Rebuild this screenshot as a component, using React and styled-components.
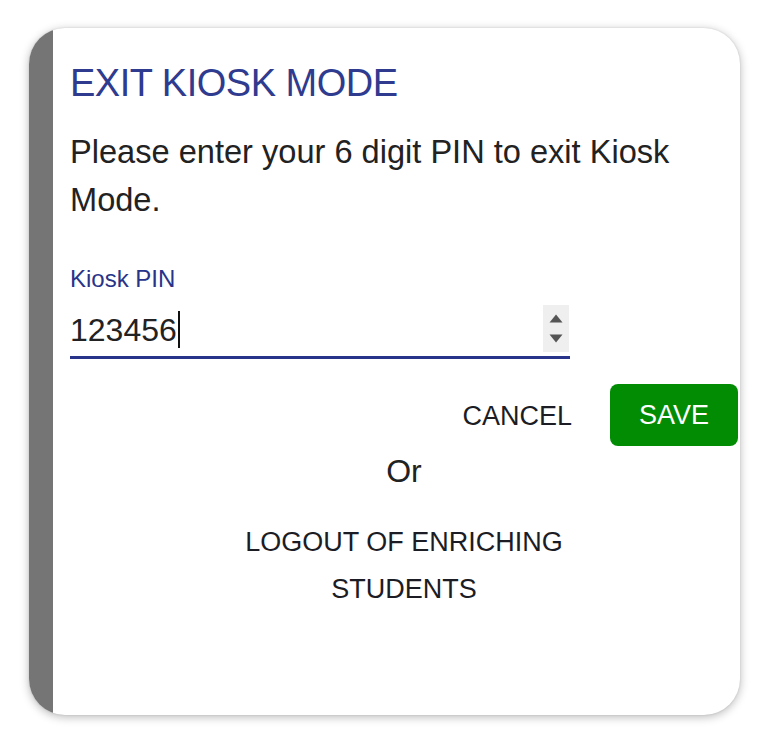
import React from 'react'
import styled, { createGlobalStyle } from 'styled-components'

const GlobalStyle = createGlobalStyle`
  html, body {
    margin: 0;
    padding: 0;
    background: #ffffff;
  }
  body {
    font-family: "Liberation Sans", Arial, Helvetica, sans-serif;
    color: #222222;
  }
`

export default function App() {
  return (
    <>
      <GlobalStyle />
      <Page>
        <Card>
          <Strip />
          <Content>
            <Title>EXIT KIOSK MODE</Title>
            <Message>Please enter your 6 digit PIN to exit Kiosk Mode.</Message>

            <Label>Kiosk PIN</Label>
            <Field>
              <Value>
                123456
                <Caret />
              </Value>
              <Spinner>
                <svg width="14" height="9" viewBox="0 0 14 9">
                  <path d="M7 0.5 L13.5 8.5 L0.5 8.5 Z" fill="#555" />
                </svg>
                <svg width="14" height="9" viewBox="0 0 14 9">
                  <path d="M0.5 0.5 L13.5 0.5 L7 8.5 Z" fill="#555" />
                </svg>
              </Spinner>
            </Field>

            <Actions>
              <TextButton>CANCEL</TextButton>
              <SaveButton>SAVE</SaveButton>
            </Actions>

            <Or>Or</Or>
            <LogoutButton>LOGOUT OF ENRICHING STUDENTS</LogoutButton>
          </Content>
        </Card>
      </Page>
    </>
  )
}

const Page = styled.div`
  padding: 28px 0 0 29px;
  width: 777px;
  height: 749px;
  box-sizing: border-box;
`

const Card = styled.div`
  width: 711px;
  height: 687px;
  display: flex;
  background: #ffffff;
  border-radius: 36px;
  overflow: hidden;
  box-shadow: 0 2px 10px rgba(0, 0, 0, 0.28), 0 0 2px rgba(0, 0, 0, 0.12);
`

const Strip = styled.div`
  width: 24px;
  flex-shrink: 0;
  background: #757575;
`

const Content = styled.div`
  flex: 1;
  display: flex;
  flex-direction: column;
  padding: 32px 2px 0 17px;
  min-width: 0;
`

const Title = styled.h2`
  margin: 0;
  font-size: 38px;
  line-height: 46px;
  font-weight: 400;
  letter-spacing: -0.5px;
  color: #2f3b8f;
`

const Message = styled.p`
  margin: 22px 0 0;
  font-size: 32.6px;
  line-height: 48px;
  color: #222222;
`

const Label = styled.label`
  margin-top: 41px;
  font-size: 24px;
  line-height: 28px;
  color: #28348a;
`

const Field = styled.div`
  width: 500px;
  height: 56px;
  margin-top: 7px;
  display: flex;
  align-items: center;
  justify-content: space-between;
  border-bottom: 3px solid #28348a;
  box-sizing: content-box;
`

const Value = styled.div`
  display: flex;
  align-items: center;
  font-size: 32px;
  line-height: 40px;
  padding-top: 3px;
  color: #222222;
`

const Caret = styled.span`
  display: inline-block;
  width: 2px;
  height: 37px;
  margin-left: 1px;
  background: #111111;
`

const Spinner = styled.div`
  width: 26px;
  height: 47px;
  margin-right: 1px;
  background: #efefef;
  display: flex;
  flex-direction: column;
  align-items: center;
  justify-content: center;
  gap: 11px;
`

const Actions = styled.div`
  margin-top: 25px;
  display: flex;
  justify-content: flex-end;
  align-items: center;
  gap: 20px;
`

const TextButton = styled.button`
  height: 62px;
  padding: 0 18px;
  border: none;
  background: transparent;
  font-family: "Liberation Sans", Arial, sans-serif;
  font-size: 27px;
  color: #1c1c24;
  padding-top: 2px;
`

const SaveButton = styled.button`
  width: 128px;
  height: 62px;
  border: none;
  border-radius: 8px;
  background: #028c04;
  color: #ffffff;
  font-family: "Liberation Sans", Arial, sans-serif;
  font-size: 27px;
`

const Or = styled.div`
  margin-top: 5px;
  text-align: center;
  font-size: 32px;
  line-height: 40px;
  color: #222222;
`

const LogoutButton = styled.button`
  align-self: center;
  max-width: 360px;
  margin-top: 28px;
  padding: 0;
  border: none;
  background: transparent;
  font-family: "Liberation Sans", Arial, sans-serif;
  font-size: 27px;
  line-height: 47px;
  color: #1c1c24;
  text-align: center;
`
